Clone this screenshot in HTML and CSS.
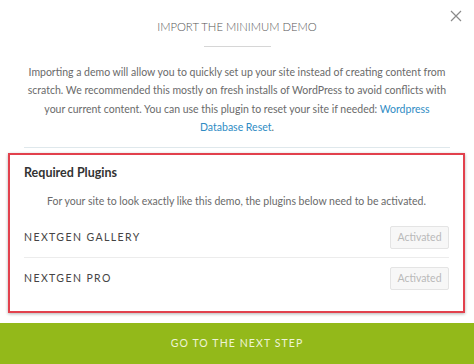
FILE: index.html
```html
<!DOCTYPE html>
<html>
<head>
<meta charset="utf-8">
<link rel="stylesheet" href="styles.css">
</head>
<body>
<div class="modal">
  <button class="close" aria-label="Close">
    <svg width="12" height="12" viewBox="0 0 12 12"><path d="M1 1L11 11M11 1L1 11" stroke="#8a8a8a" stroke-width="1.2" fill="none"/></svg>
  </button>
  <h1 class="title">IMPORT THE MINIMUM DEMO</h1>
  <div class="title-rule"></div>
  <p class="intro">Importing a demo will allow you to quickly set up your site instead of creating content from scratch. We recommended this mostly on fresh installs of WordPress to avoid conflicts with your current content. You can use this plugin to reset your site if needed: <a href="#" class="link">Wordpress Database Reset</a>.</p>
  <div class="sep"></div>
  <section class="plugins">
    <h2 class="plugins-title">Required Plugins</h2>
    <p class="plugins-desc">For your site to look exactly like this demo, the plugins below need to be activated.</p>
    <div class="plugin-row">
      <span class="plugin-name">NEXTGEN GALLERY</span>
      <span class="badge">Activated</span>
    </div>
    <div class="plugin-row last">
      <span class="plugin-name">NEXTGEN PRO</span>
      <span class="badge">Activated</span>
    </div>
  </section>
  <div class="footer">GO TO THE NEXT STEP</div>
</div>
</body>
</html>
```
FILE: styles.css
```css
html, body {
  margin: 0;
  padding: 0;
  background: #fff;
}
body {
  font-family: "Lato", "Open Sans", sans-serif;
  color: #666;
}
.modal {
  position: relative;
  width: 474px;
  height: 364px;
  overflow: hidden;
  display: flex;
  flex-direction: column;
}
.close {
  position: absolute;
  top: 10px;
  right: 12px;
  border: 0;
  background: none;
  padding: 0;
  width: 12px;
  height: 12px;
  display: flex;
}
.title {
  margin: 18px 0 0;
  font-size: 11.3px;
  font-weight: 300;
  color: #555;
  text-align: center;
  line-height: 18px;
  letter-spacing: 0;
}
.title-rule {
  width: 67px;
  height: 1px;
  background: #d6d6d6;
  margin: 10px auto 0;
}
.intro {
  margin: 16px 24px 0;
  font-size: 10.5px;
  line-height: 18.4px;
  text-align: center;
  color: #6a6a6a;
  font-weight: 400;
}
.link {
  color: #2f8cc4;
  text-decoration: none;
}
.sep {
  height: 1px;
  background: #dfe8ec;
  margin: 10px 24px 0;
}
.plugins {
  margin: 5px 9px 0 8px;
  border: 2px solid #e2414d;
  box-shadow: 0 1px 3px rgba(0,0,0,0.3);
  padding: 8px 14px 13px;
}
.plugins-title {
  margin: 0;
  font-size: 12.5px;
  font-weight: 700;
  color: #333;
  line-height: 20px;
}
.plugins-desc {
  margin: 10px 0 0;
  font-size: 10.5px;
  line-height: 16px;
  text-align: center;
  color: #6a6a6a;
}
.plugin-row {
  display: flex;
  justify-content: space-between;
  align-items: center;
  padding: 9px 0 8px;
  border-bottom: 1px solid #ececec;
  margin-top: 8px;
}
.plugin-row.last {
  border-bottom: 0;
  margin-top: 0;
}
.plugin-name {
  font-size: 10.5px;
  letter-spacing: 1.4px;
  color: #444;
}
.badge {
  width: 57px;
  height: 21px;
  border: 1px solid #e4e4e4;
  border-radius: 2px;
  background: #f7f7f7;
  color: #b9b9b9;
  font-size: 10.5px;
  display: flex;
  align-items: center;
  justify-content: center;
}
.footer {
  margin-top: 10px;
  height: 44px;
  background: #93b91a;
  color: #eef4d6;
  font-size: 10.5px;
  letter-spacing: 1.1px;
  display: flex;
  align-items: center;
  justify-content: center;
}
```
